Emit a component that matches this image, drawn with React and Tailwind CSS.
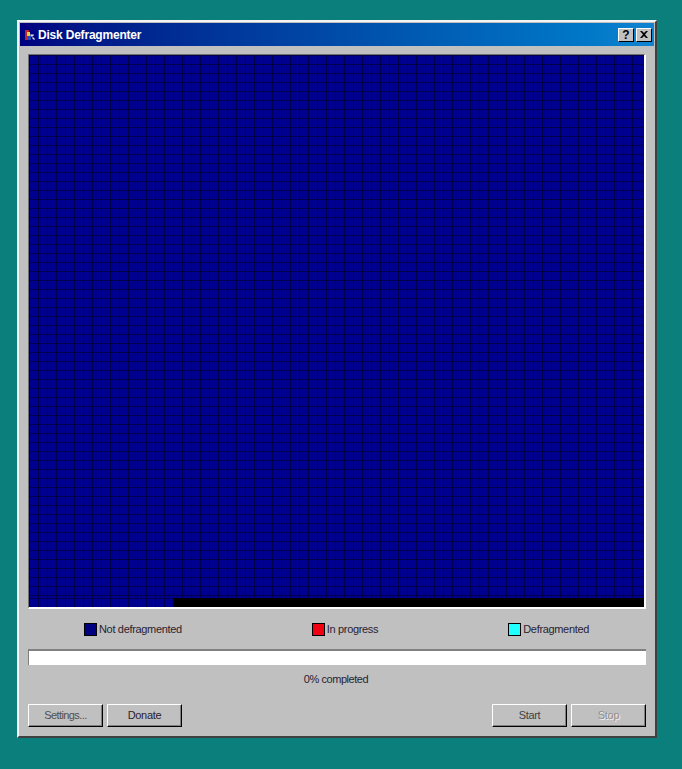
const COLS = 69;
const ROWS = 61;
const DONE_CELLS = 16;

const cellClass = "w-[9px] h-[9px] shrink-0 bg-[#000090] border-t border-l border-[#00004c]";

function CellRow({ count }) {
  return (
    <div className="flex">
      {Array.from({ length: count }, (_, i) => (
        <div key={i} className={cellClass} />
      ))}
    </div>
  );
}

function LegendItem({ swatch, label }) {
  return (
    <div className="flex items-center gap-[2px]">
      <span className={`w-[13px] h-[13px] border border-black ${swatch}`} />
      <span className="text-[11px] leading-[13px] tracking-[-0.33px] text-[#2a2230]">{label}</span>
    </div>
  );
}

function WinButton({ label, className = "" }) {
  return (
    <button
      className={`w-[75px] h-[23px] bg-[#c0c0c0] border border-t-white border-l-white border-r-black border-b-black shadow-[inset_-1px_-1px_0_#808080] text-[11px] tracking-[-0.3px] ${className}`}
    >
      {label}
    </button>
  );
}

function CaptionButton({ children }) {
  return (
    <span className="w-4 h-[14px] bg-[#c0c0c0] border border-t-white border-l-white border-r-black border-b-black flex items-center justify-center text-black">
      {children}
    </span>
  );
}

export default function App() {
  return (
    <div className="w-[682px] h-[769px] bg-[#0a7f7b] pt-[20px] pl-[17px] overflow-hidden font-['Liberation_Sans',Arial,sans-serif]">
      {/* Window */}
      <div className="w-[640px] h-[718px] bg-[#c0c0c0] border-2 border-t-[#f4f4f4] border-l-[#f4f4f4] border-r-[#404040] border-b-[#404040] flex flex-col">
        {/* Title bar */}
        <div className="h-[23px] ml-px mr-px mt-px bg-gradient-to-r from-[#000080] to-[#1084d0] flex items-center pl-[2px] pr-[2px]">
          <svg width="16" height="16" viewBox="0 0 16 16" className="shrink-0">
            <path d="M3 3h4v10H3z" fill="#c02030" />
            <path d="M5 5h3v4H5z" fill="#e8d040" />
            <path d="M6 9h3v4H6z" fill="#2050c0" />
            <path d="M9 7l2 2-1 1-2-2zM11 10l2 2-1 1-2-2zM11 7l1 1-1 1-1-1z" fill="#e0e0e0" />
          </svg>
          <span className="text-[12px] font-bold tracking-[-0.2px] text-white">Disk Defragmenter</span>
          <div className="ml-auto flex gap-[2px]">
            <CaptionButton>
              <span className="text-[12px] leading-none font-bold">?</span>
            </CaptionButton>
            <CaptionButton>
              <svg width="8" height="7" viewBox="0 0 8 7">
                <path d="M0 0h2l2 2 2-2h2L5 3.500 8 7H6L4 5 2 7H0l3-3.500z" fill="#000" />
              </svg>
            </CaptionButton>
          </div>
        </div>

        {/* Client area */}
        <div className="flex-1 flex flex-col px-[9px] pt-[8px]">
          {/* Cluster map */}
          <div className="w-[618px] h-[555px] overflow-hidden border border-t-[#707070] border-l-[#707070] border-r-white border-b-white border-b-2 border-r-2 flex flex-col">
            <div className="h-[543px] overflow-hidden">
              {Array.from({ length: ROWS }, (_, i) => (
                <CellRow key={i} count={COLS} />
              ))}
            </div>
            <div className="h-[9px] flex bg-black">
              <CellRow count={DONE_CELLS} />
            </div>
          </div>

          {/* Legend */}
          <div className="mt-[14px] h-[13px] flex justify-between pl-[56px] pr-[57px]">
            <LegendItem swatch="bg-[#000080]" label="Not defragmented" />
            <LegendItem swatch="bg-[#f00010]" label="In progress" />
            <LegendItem swatch="bg-[#20ffff]" label="Defragmented" />
          </div>

          {/* Progress */}
          <div className="mt-[13px] w-[618px] h-[16px] bg-white border-t-2 border-l border-[#808080]" />
          <p className="mt-[7px] pr-[2px] text-center text-[11px] leading-[14px] tracking-[-0.45px] text-[#2a2230]">0% completed</p>

          {/* Buttons */}
          <div className="mt-[18px] w-[618px] flex gap-1">
            <WinButton label="Settings..." className="text-[#505050] tracking-[-0.6px]" />
            <WinButton label="Donate" className="text-[#2a2230]" />
            <WinButton label="Start" className="ml-auto text-[#404040]" />
            <WinButton label="Stop" className="text-[#909090] [text-shadow:1px_1px_0_#f0f0f0]" />
          </div>
        </div>
      </div>
    </div>
  );
}
